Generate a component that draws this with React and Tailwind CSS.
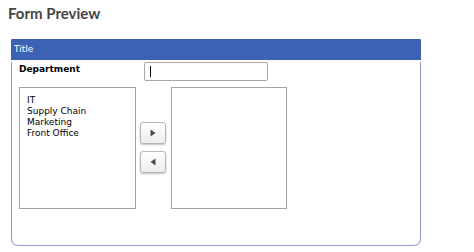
import React from "react";

function Tri({ dir }) {
  return (
    <svg width="6" height="8" viewBox="0 0 6 8" className="block">
      {dir === "right" ? (
        <path d="M0.5 0.5 L5.5 4 L0.5 7.5 Z" fill="#4a4a4a" />
      ) : (
        <path d="M5.5 0.5 L0.5 4 L5.5 7.5 Z" fill="#4a4a4a" />
      )}
    </svg>
  );
}

function MoveButton({ dir }) {
  return (
    <button className="w-[26px] h-[22px] rounded-[3px] border border-[#b5b5b5] bg-gradient-to-b from-white to-[#ededed] shadow-[0_1px_2px_rgba(0,0,0,0.25)] flex items-center justify-center">
      <Tri dir={dir} />
    </button>
  );
}

export default function App() {
  const items = ["IT", "Supply Chain", "Marketing", "Front Office"];
  return (
    <div className="w-[474px] h-[252px] bg-white overflow-hidden font-['DejaVu_Sans',sans-serif] text-[9px] text-black">
      <div className="pl-[8px] pt-[3px] h-[39px] font-['Lato',sans-serif] font-bold text-[15px] leading-[20px] text-[#444444]">
        Form Preview
      </div>
      <div className="ml-[11px] w-[410px]">
        <div className="h-[21px] bg-[#3b62b4] text-white pl-[3px] leading-[21px] rounded-t-[1px]">
          Title
        </div>
        <div className="h-[184px] border-x border-b border-[#8f9bd6] rounded-b-[7px]">
          <div className="flex mt-[2px]">
            <div className="w-[132px] pl-[7px] pt-[2px] font-bold leading-[11px]">Department</div>
            <div className="w-[124px] h-[19px] border border-[#a8a8a8] rounded-[2px] flex items-center pl-[5px]">
              <span className="block w-px h-[11px] bg-black" />
            </div>
          </div>
          <div className="flex mt-[6px] pl-[7px]">
            <div className="w-[117px] h-[122px] border border-[#a3a3a3] pl-[7px] pt-[7px] leading-[11px]">
              {items.map((t) => (
                <div key={t}>{t}</div>
              ))}
            </div>
            <div className="ml-[4px] pt-[35px] flex flex-col gap-[7px]">
              <MoveButton dir="right" />
              <MoveButton dir="left" />
            </div>
            <div className="ml-[5px] w-[116px] h-[122px] border border-[#a3a3a3]" />
          </div>
        </div>
      </div>
    </div>
  );
}
